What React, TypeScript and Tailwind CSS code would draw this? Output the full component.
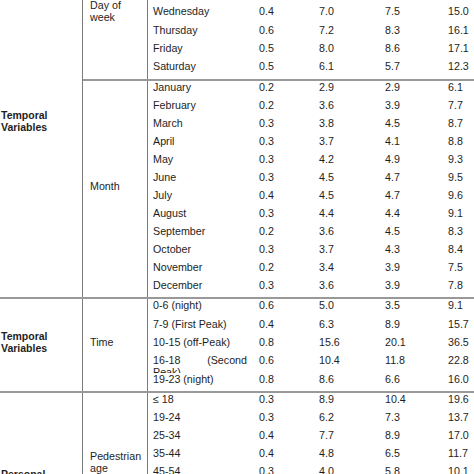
type Row = { label: string; v: string[] };

const dayRows: Row[] = [
  { label: "Wednesday", v: ["0.4", "7.0", "7.5", "15.0"] },
  { label: "Thursday", v: ["0.6", "7.2", "8.3", "16.1"] },
  { label: "Friday", v: ["0.5", "8.0", "8.6", "17.1"] },
  { label: "Saturday", v: ["0.5", "6.1", "5.7", "12.3"] },
];

const monthRows: Row[] = [
  { label: "January", v: ["0.2", "2.9", "2.9", "6.1"] },
  { label: "February", v: ["0.2", "3.6", "3.9", "7.7"] },
  { label: "March", v: ["0.3", "3.8", "4.5", "8.7"] },
  { label: "April", v: ["0.3", "3.7", "4.1", "8.8"] },
  { label: "May", v: ["0.3", "4.2", "4.9", "9.3"] },
  { label: "June", v: ["0.3", "4.5", "4.7", "9.5"] },
  { label: "July", v: ["0.4", "4.5", "4.7", "9.6"] },
  { label: "August", v: ["0.3", "4.4", "4.4", "9.1"] },
  { label: "September", v: ["0.2", "3.6", "4.5", "8.3"] },
  { label: "October", v: ["0.3", "3.7", "4.3", "8.4"] },
  { label: "November", v: ["0.2", "3.4", "3.9", "7.5"] },
  { label: "December", v: ["0.3", "3.6", "3.9", "7.8"] },
];

const timeRows: Row[] = [
  { label: "0-6 (night)", v: ["0.6", "5.0", "3.5", "9.1"] },
  { label: "7-9 (First Peak)", v: ["0.4", "6.3", "8.9", "15.7"] },
  { label: "10-15 (off-Peak)", v: ["0.8", "15.6", "20.1", "36.5"] },
  { label: "16-18 (Second Peak)", v: ["0.6", "10.4", "11.8", "22.8"] },
  { label: "19-23 (night)", v: ["0.8", "8.6", "6.6", "16.0"] },
];

const ageRows: Row[] = [
  { label: "≤ 18", v: ["0.3", "8.9", "10.4", "19.6"] },
  { label: "19-24", v: ["0.3", "6.2", "7.3", "13.7"] },
  { label: "25-34", v: ["0.4", "7.7", "8.9", "17.0"] },
  { label: "35-44", v: ["0.4", "4.8", "6.5", "11.7"] },
  { label: "45-54", v: ["0.3", "4.0", "5.8", "10.1"] },
];

function DataRow({ row, h }: { row: Row; h: string }) {
  const wrap = row.label.length > 17;
  return (
    <div className={`flex overflow-hidden leading-[12px] ${h}`}>
      <div
        className={`w-[107px] shrink-0 pl-[5px] pr-[8px] text-justify ${
          wrap ? "" : "whitespace-nowrap"
        }`}
      >
        {row.label}
      </div>
      <div className="w-[60px] shrink-0 pl-[4px]">{row.v[0]}</div>
      <div className="w-[66px] shrink-0 pl-[4px]">{row.v[1]}</div>
      <div className="w-[63px] shrink-0 pl-[4px]">{row.v[2]}</div>
      <div className="flex-1 pl-[4px]">{row.v[3]}</div>
    </div>
  );
}

function SubLabel({ children }: { children?: React.ReactNode }) {
  return (
    <div className="w-[65px] shrink-0 border-r border-[#7c7c7c] pl-[7px] pr-[2px] pb-[7px] flex items-center leading-[12px]">
      <div>{children}</div>
    </div>
  );
}

function GroupLabel({ children }: { children: React.ReactNode }) {
  return (
    <div className="w-[83px] shrink-0 border-r border-[#7c7c7c] pl-[1px] pb-[7px] flex items-center font-bold text-[10.5px] leading-[12px]">
      <div>{children}</div>
    </div>
  );
}

export default function App() {
  return (
    <div className="w-[474px] h-[474px] overflow-hidden bg-white text-[#1e1e1e] text-[10.7px] font-['Liberation_Sans',Arial,sans-serif]">
      <div className="-mt-[49.3px]">
        {/* Temporal: day of week + month */}
        <div className="flex">
          <GroupLabel>Temporal Variables</GroupLabel>
          <div className="flex-1 flex flex-col">
            <div className="flex">
              <SubLabel>Day of week</SubLabel>
              <div className="flex-1 flex flex-col">
                <div className="h-[54.6px]" />
                {dayRows.map((r) => (
                  <DataRow key={r.label} row={r} h="h-[18.4px]" />
                ))}
              </div>
            </div>
            <div className="flex border-t-2 border-[#999]">
              <SubLabel>Month</SubLabel>
              <div className="flex-1 flex flex-col">
                {monthRows.map((r) => (
                  <DataRow key={r.label} row={r} h="h-[18.05px]" />
                ))}
              </div>
            </div>
          </div>
        </div>

        {/* Temporal: time of day */}
        <div className="flex border-t-2 border-[#999]">
          <GroupLabel>Temporal Variables</GroupLabel>
          <div className="flex-1 flex">
            <SubLabel>Time</SubLabel>
            <div className="flex-1 flex flex-col">
              {timeRows.map((r) => (
                <DataRow key={r.label} row={r} h="h-[18.35px]" />
              ))}
            </div>
          </div>
        </div>

        {/* Personal */}
        <div className="flex border-t-2 border-[#999]">
          <GroupLabel>Personal Variables</GroupLabel>
          <div className="flex-1 flex flex-col">
            <div className="flex">
              <SubLabel>Pedestrian age</SubLabel>
              <div className="flex-1 flex flex-col">
                {ageRows.map((r) => (
                  <DataRow key={r.label} row={r} h="h-[18px]" />
                ))}
                <div className="h-[54px]" />
              </div>
            </div>
            <div className="flex border-t-2 border-[#999] h-[36px]">
              <SubLabel />
            </div>
          </div>
        </div>
      </div>
    </div>
  );
}
